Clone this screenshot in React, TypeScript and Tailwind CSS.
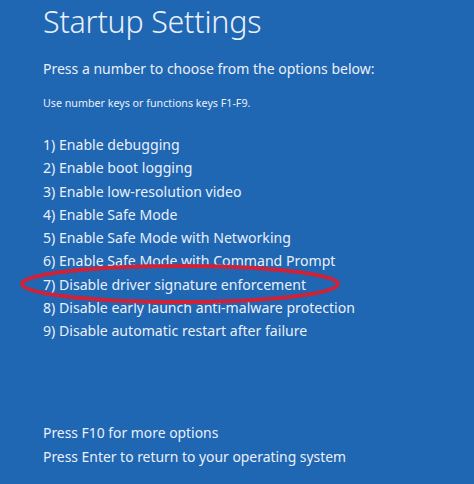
const options = [
  "1) Enable debugging",
  "2) Enable boot logging",
  "3) Enable low-resolution video",
  "4) Enable Safe Mode",
  "5) Enable Safe Mode with Networking",
  "6) Enable Safe Mode with Command Prompt",
  "7) Disable driver signature enforcement",
  "8) Disable early launch anti-malware protection",
  "9) Disable automatic restart after failure",
];

export default function App() {
  return (
    <div
      className="w-[474px] h-[484px] overflow-hidden bg-[#1f66b3] text-[#eaf0f9] flex flex-col pl-[43px]"
      style={{ fontFamily: '"Noto Sans", "Open Sans", sans-serif' }}
    >
      <h1 className="text-[30.4px] leading-[40px] mt-[2px] font-light tracking-[-0.2px]">Startup Settings</h1>
      <p className="text-[14px] leading-[20px] mt-[17px]">Press a number to choose from the options below:</p>
      <p className="text-[10.7px] leading-[14px] mt-[17px]">Use number keys or functions keys F1-F9.</p>

      <div className="relative mt-[23px]">
        <ul className="flex flex-col">
          {options.map((o) => (
            <li key={o} className="text-[14.1px] leading-[23.3px] whitespace-nowrap">
              {o}
            </li>
          ))}
        </ul>
        {/* red marker circle around option 7 */}
        <svg
          className="absolute left-[-43px] top-0 pointer-events-none"
          width="474"
          height="220"
          viewBox="0 0 474 220"
        >
          <ellipse cx="180" cy="151" rx="158" ry="18" fill="none" stroke="#cf2238" strokeWidth="4" />
        </svg>
      </div>

      <div className="mt-auto mb-[15px] flex flex-col">
        <p className="text-[13.9px] leading-[24px]">Press F10 for more options</p>
        <p className="text-[13.9px] leading-[24px]">Press Enter to return to your operating system</p>
      </div>
    </div>
  );
}
